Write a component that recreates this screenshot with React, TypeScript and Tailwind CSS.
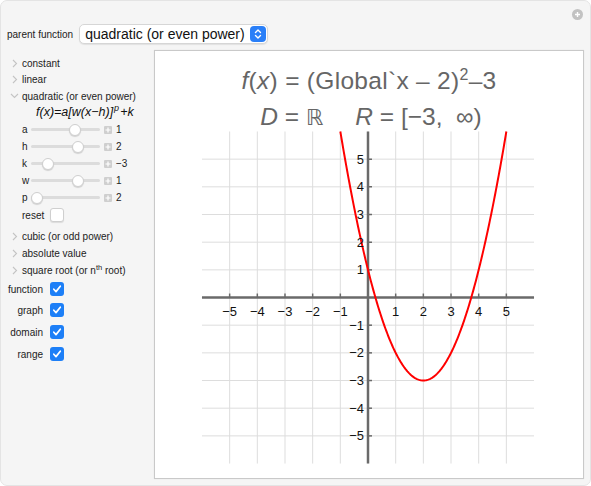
import React from "react";

const U = 27.75;
const CX = 213;
const CY = 169;

function Chevron({ open }: { open?: boolean }) {
  return open ? (
    <svg width="9" height="6" viewBox="0 0 9 6" className="shrink-0">
      <path d="M1 1 L4.5 4.5 L8 1" fill="none" stroke="#c4c4c4" strokeWidth="1.1" />
    </svg>
  ) : (
    <svg width="6" height="9" viewBox="0 0 6 9" className="shrink-0">
      <path d="M1 1 L4.5 4.5 L1 8" fill="none" stroke="#c4c4c4" strokeWidth="1.1" />
    </svg>
  );
}

function Section({ label, open }: { label: React.ReactNode; open?: boolean }) {
  return (
    <div className="flex items-center h-[17px]">
      <div className={open ? "w-[21px] pl-[9px] flex items-center" : "w-[21px] pl-[11px] flex items-center"}>
        <Chevron open={open} />
      </div>
      <span className="text-[10px] text-[#222] whitespace-nowrap">{label}</span>
    </div>
  );
}

function PlusBox() {
  return (
    <div className="w-[8px] h-[8px] bg-[#cfcfcf] rounded-[1px] flex items-center justify-center">
      <svg width="6" height="6" viewBox="0 0 6 6">
        <path d="M3 0.5 V5.5 M0.5 3 H5.5" stroke="#fff" strokeWidth="1.2" />
      </svg>
    </div>
  );
}

function SliderRow({ label, value, knob }: { label: string; value: string; knob: number }) {
  return (
    <div className="flex items-center h-[17px]">
      <span className="w-[30px] pl-[21px] text-[10px] text-[#222]">{label}</span>
      <div className="relative w-[69px] h-[12px] flex items-center">
        <div className="w-full h-[3px] bg-[#dcdcdc] rounded-full" />
        <div
          className="absolute top-[0px] w-[12px] h-[12px] rounded-full bg-white border border-[#cfcfcf] shadow-[0_1px_1px_rgba(0,0,0,0.15)]"
          style={{ left: knob - 30 - 6 }}
        />
      </div>
      <div className="ml-[4px]">
        <PlusBox />
      </div>
      <span className="ml-[4px] text-[10px] text-[#222]">{value}</span>
    </div>
  );
}

function BlueCheck() {
  return (
    <div className="w-[14px] h-[14px] rounded-[3px] bg-[#1d7ff7] flex items-center justify-center">
      <svg width="10" height="10" viewBox="0 0 10 10">
        <path d="M1.8 5.2 L4 7.6 L8.3 2.2" fill="none" stroke="#fff" strokeWidth="1.7" strokeLinecap="round" strokeLinejoin="round" />
      </svg>
    </div>
  );
}

function CheckRow({ label, h }: { label: string; h: string }) {
  return (
    <div className={`flex items-center ${h}`}>
      <span className="w-[42px] text-right text-[10px] text-[#222]">{label}</span>
      <div className="ml-[7px]">
        <BlueCheck />
      </div>
    </div>
  );
}

function Graph() {
  const ticks = [-5, -4, -3, -2, -1, 1, 2, 3, 4, 5];
  const all = [-5, -4, -3, -2, -1, 0, 1, 2, 3, 4, 5];
  const pts: string[] = [];
  for (let i = 0; i <= 240; i++) {
    const x = -1 + (6 * i) / 240;
    const y = (x - 2) * (x - 2) - 3;
    pts.push(`${(CX + x * U).toFixed(2)},${(CY - y * U).toFixed(2)}`);
  }
  const left = CX - 6 * U;
  const right = CX + 6 * U;
  const top = CY - 6 * U;
  const bottom = CY + 6 * U;
  return (
    <svg width="428" height="350" viewBox="0 0 428 350" className="block">
      {all.map((i) => (
        <line key={"v" + i} x1={CX + i * U} x2={CX + i * U} y1={top} y2={bottom} stroke="#dddddd" strokeWidth="1" />
      ))}
      {all.map((i) => (
        <line key={"h" + i} x1={left} x2={right} y1={CY - i * U} y2={CY - i * U} stroke="#dddddd" strokeWidth="1" />
      ))}
      <line x1={left} x2={right} y1={CY} y2={CY} stroke="#6a6a6a" strokeWidth="2.5" />
      <line x1={CX} x2={CX} y1={top} y2={bottom} stroke="#6a6a6a" strokeWidth="2.5" />
      {ticks.map((i) => (
        <line key={"tx" + i} x1={CX + i * U} x2={CX + i * U} y1={CY - 4} y2={CY} stroke="#6a6a6a" strokeWidth="1.5" />
      ))}
      {ticks.map((i) => (
        <line key={"ty" + i} x1={CX} x2={CX + 4} y1={CY - i * U} y2={CY - i * U} stroke="#6a6a6a" strokeWidth="1.5" />
      ))}
      <polyline points={pts.join(" ")} fill="none" stroke="#ff0000" strokeWidth="2" />
      {ticks.map((i) => (
        <text
          key={"lx" + i}
          x={CX + i * U}
          y={CY + 19}
          textAnchor="middle"
          fontSize="13"
          fill="#111"
          fontFamily="'Liberation Sans', Arial, sans-serif"
        >
          {i < 0 ? `\u2212${-i}` : `${i}`}
        </text>
      ))}
      {ticks.map((i) => (
        <text
          key={"ly" + i}
          x={CX - 4}
          y={CY - i * U + 4.5}
          textAnchor="end"
          fontSize="13"
          fill="#111"
          fontFamily="'Liberation Sans', Arial, sans-serif"
        >
          {i < 0 ? `\u2212${-i}` : `${i}`}
        </text>
      ))}
    </svg>
  );
}

export default function App() {
  return (
    <div className="w-[591px] h-[486px] bg-[#f5f5f5] border border-[#e4e4e4] rounded-[7px] relative overflow-hidden font-['Liberation_Sans',Arial,sans-serif]">
      <div className="absolute right-[7px] top-[8px] w-[11px] h-[11px] rounded-full bg-[#c2c2c2] flex items-center justify-center">
        <svg width="7" height="7" viewBox="0 0 7 7">
          <path d="M3.5 1 V6 M1 3.5 H6" stroke="#fff" strokeWidth="1.4" />
        </svg>
      </div>

      <div className="flex items-center h-[20px] mt-[23px] pl-[6px]">
        <span className="text-[10px] text-[#222] whitespace-nowrap">parent function</span>
        <div className="ml-[6px] shrink-0 w-[189px] h-[20px] bg-white rounded-[5px] border border-[#d6d6d6] shadow-[0_1px_1px_rgba(0,0,0,0.08)] flex items-center justify-between pl-[5px] pr-[1px]">
          <span className="text-[14px] text-[#111] whitespace-nowrap">quadratic (or even power)</span>
          <div className="w-[16px] h-[16px] rounded-[4px] bg-[#2a7ff8] flex items-center justify-center">
            <svg width="8" height="12" viewBox="0 0 8 12">
              <path d="M1.5 4.5 L4 2 L6.5 4.5 M1.5 7.5 L4 10 L6.5 7.5" fill="none" stroke="#fff" strokeWidth="1.4" strokeLinecap="round" strokeLinejoin="round" />
            </svg>
          </div>
        </div>
      </div>

      <div className="flex mt-[6px]">
        <div className="w-[153px] shrink-0 pt-[5px] flex flex-col">
          <div className="h-[16px] flex items-center">
            <Section label="constant" />
          </div>
          <Section label="linear" />
          <div className="h-[16px] flex items-center">
            <Section label="quadratic (or even power)" open />
          </div>
          <div className="h-[17px] flex items-center pl-[35px] text-[12.5px] italic text-[#111] whitespace-nowrap">
            f(x)=a[w(x−h)]<sup className="text-[9px] top-[-5px] ml-[1px]">p</sup>
            <span className="ml-[1px]">+k</span>
          </div>
          <SliderRow label="a" value="1" knob={74} />
          <SliderRow label="h" value="2" knob={77} />
          <SliderRow label="k" value="−3" knob={47} />
          <SliderRow label="w" value="1" knob={77} />
          <SliderRow label="p" value="2" knob={36} />
          <div className="flex items-center h-[18px]">
            <span className="w-[28px] pl-[21px] text-[10px] text-[#222] whitespace-nowrap">reset</span>
            <div className="ml-[21px] w-[14px] h-[14px] rounded-[3px] bg-white border border-[#cfcfcf] shadow-[0_1px_1px_rgba(0,0,0,0.1)]" />
          </div>
          <div className="mt-[4px]">
            <Section label="cubic (or odd power)" />
          </div>
          <Section label="absolute value" />
          <Section
            label={
              <>
                square root (or n<sup className="text-[7.5px] top-[-4px]">th</sup> root)
              </>
            }
          />
          <CheckRow label="function" h="h-[20px]" />
          <CheckRow label="graph" h="h-[22px]" />
          <CheckRow label="domain" h="h-[22px]" />
          <CheckRow label="range" h="h-[22px]" />
        </div>

        <div className="w-[430px] shrink-0 h-[429px] bg-white border border-[#c9c9c9] shadow-[0_0_1px_rgba(0,0,0,0.1)] flex flex-col">
          <div className="h-[78px] pt-[12px] flex flex-col items-center text-[#666] text-[24.5px]">
            <div className="h-[36px] leading-[36px] whitespace-nowrap tracking-[0.3px]">
              <span className="italic">f</span>(<span className="italic">x</span>) = (Global`x – 2)
              <sup className="text-[16px] top-[-9px]">2</sup>–3
            </div>
            <div className="h-[36px] leading-[36px] whitespace-nowrap pl-[4px]">
              <span className="italic">D</span> = <span className="font-['DejaVu_Sans',sans-serif] text-[22px]">ℝ</span>
              <span className="inline-block w-[32px]" />
              <span className="italic">R</span> = [−3,&nbsp; ∞)
            </div>
          </div>
          <Graph />
        </div>
      </div>
    </div>
  );
}
